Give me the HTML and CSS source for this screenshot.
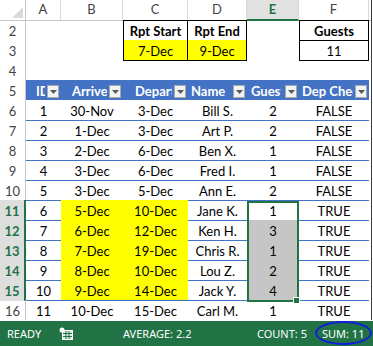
FILE: index.html
```html
<!DOCTYPE html>
<html lang="en">
<head>
  <meta charset="UTF-8">
  <meta name="viewport" content="width=device-width, initial-scale=1.0">
  <title>Guest Report</title>
  <link rel="stylesheet" href="styles.css">
</head>
<body>

  <div class="sheet">
    <!-- column letters -->
    <div class="row">
      <div class="corner">
        <svg width="11" height="11" viewBox="0 0 11 11"><path d="M11 0V11H0z" fill="#dadada"/></svg>
      </div>
      <div class="col-head">A</div>
      <div class="col-head">B</div>
      <div class="col-head">C</div>
      <div class="col-head">D</div>
      <div class="col-head is-active">E</div>
      <div class="col-head">F</div>
      <div class="col-head col-head-end"></div>
    </div>

    <!-- report inputs -->
    <div class="row">
      <div class="row-num">2</div>
      <div class="cell"></div>
      <div class="cell"></div>
      <div class="cell bold box box-top box-left">Rpt Start</div>
      <div class="cell bold box box-top">Rpt End</div>
      <div class="cell"></div>
      <div class="cell bold box box-top box-left">Guests</div>
      <div class="cell"></div>
    </div>
    <div class="row">
      <div class="row-num">3</div>
      <div class="cell"></div>
      <div class="cell"></div>
      <div class="cell box box-left is-yellow">7-Dec</div>
      <div class="cell box is-yellow">9-Dec</div>
      <div class="cell"></div>
      <div class="cell box box-left">11</div>
      <div class="cell"></div>
    </div>
    <div class="row">
      <div class="row-num">4</div>
      <div class="cell"></div><div class="cell"></div><div class="cell"></div>
      <div class="cell"></div><div class="cell"></div><div class="cell"></div><div class="cell"></div>
    </div>

    <!-- bookings table -->
    <div class="row">
      <div class="row-num">5</div>
      <div class="th th-a"><span class="th-label">ID</span><span class="th-btn"><svg width="7" height="4" viewBox="0 0 7 4"><path d="M0 0H7L3.5 4z" fill="#595959"/></svg></span></div>
      <div class="th th-b"><span class="th-label">Arrived</span><span class="th-btn"><svg width="7" height="4" viewBox="0 0 7 4"><path d="M0 0H7L3.5 4z" fill="#595959"/></svg></span></div>
      <div class="th th-c"><span class="th-label">Departed</span><span class="th-btn"><svg width="7" height="4" viewBox="0 0 7 4"><path d="M0 0H7L3.5 4z" fill="#595959"/></svg></span></div>
      <div class="th th-d"><span class="th-label">Name</span><span class="th-btn"><svg width="7" height="4" viewBox="0 0 7 4"><path d="M0 0H7L3.5 4z" fill="#595959"/></svg></span></div>
      <div class="th th-e"><span class="th-label">Guests</span><span class="th-btn"><svg width="7" height="4" viewBox="0 0 7 4"><path d="M0 0H7L3.5 4z" fill="#595959"/></svg></span></div>
      <div class="th th-f"><span class="th-label">Dep Check</span><span class="th-btn"><svg width="7" height="4" viewBox="0 0 7 4"><path d="M0 0H7L3.5 4z" fill="#595959"/></svg></span></div>
      <div class="cell"></div>
    </div>
    <div class="row">
      <div class="row-num">6</div>
      <div class="cell td">1</div><div class="cell td">30-Nov</div><div class="cell td">3-Dec</div>
      <div class="cell td">Bill S.</div><div class="cell td">2</div><div class="cell td">FALSE</div><div class="cell"></div>
    </div>
    <div class="row">
      <div class="row-num">7</div>
      <div class="cell td">2</div><div class="cell td">1-Dec</div><div class="cell td">3-Dec</div>
      <div class="cell td">Art P.</div><div class="cell td">2</div><div class="cell td">FALSE</div><div class="cell"></div>
    </div>
    <div class="row">
      <div class="row-num">8</div>
      <div class="cell td">3</div><div class="cell td">2-Dec</div><div class="cell td">6-Dec</div>
      <div class="cell td">Ben X.</div><div class="cell td">1</div><div class="cell td">FALSE</div><div class="cell"></div>
    </div>
    <div class="row">
      <div class="row-num">9</div>
      <div class="cell td">4</div><div class="cell td">3-Dec</div><div class="cell td">6-Dec</div>
      <div class="cell td">Fred I.</div><div class="cell td">1</div><div class="cell td">FALSE</div><div class="cell"></div>
    </div>
    <div class="row">
      <div class="row-num">10</div>
      <div class="cell td">5</div><div class="cell td">3-Dec</div><div class="cell td">5-Dec</div>
      <div class="cell td">Ann E.</div><div class="cell td">2</div><div class="cell td">FALSE</div><div class="cell"></div>
    </div>
    <div class="row">
      <div class="row-num is-active">11</div>
      <div class="cell td">6</div><div class="cell td is-yellow">5-Dec</div><div class="cell td is-yellow">10-Dec</div>
      <div class="cell td">Jane K.</div><div class="cell td">1</div><div class="cell td">TRUE</div><div class="cell"></div>
    </div>
    <div class="row">
      <div class="row-num is-active">12</div>
      <div class="cell td">7</div><div class="cell td is-yellow">6-Dec</div><div class="cell td is-yellow">12-Dec</div>
      <div class="cell td">Ken H.</div><div class="cell td is-selected">3</div><div class="cell td">TRUE</div><div class="cell"></div>
    </div>
    <div class="row">
      <div class="row-num is-active">13</div>
      <div class="cell td">8</div><div class="cell td is-yellow">7-Dec</div><div class="cell td is-yellow">19-Dec</div>
      <div class="cell td">Chris R.</div><div class="cell td is-selected">1</div><div class="cell td">TRUE</div><div class="cell"></div>
    </div>
    <div class="row">
      <div class="row-num is-active">14</div>
      <div class="cell td">9</div><div class="cell td is-yellow">8-Dec</div><div class="cell td is-yellow">10-Dec</div>
      <div class="cell td">Lou Z.</div><div class="cell td is-selected">2</div><div class="cell td">TRUE</div><div class="cell"></div>
    </div>
    <div class="row">
      <div class="row-num is-active">15</div>
      <div class="cell td">10</div><div class="cell td is-yellow">9-Dec</div><div class="cell td is-yellow">14-Dec</div>
      <div class="cell td">Jack Y.</div><div class="cell td is-selected">4</div><div class="cell td">TRUE</div><div class="cell"></div>
    </div>
    <div class="row">
      <div class="row-num">16</div>
      <div class="cell td">11</div><div class="cell td">10-Dec</div><div class="cell td">15-Dec</div>
      <div class="cell td">Carl M.</div><div class="cell td">1</div><div class="cell td">TRUE</div><div class="cell"></div>
    </div>

    <!-- selected range E11:E15 -->
    <div class="selection"><span class="fill-handle"></span></div>
  </div>

  <div class="status-bar">
    <span class="status-ready">READY</span>
    <span class="status-icon">
      <svg width="14" height="14" viewBox="0 0 14 14">
        <rect x="3.5" y="3.5" width="10" height="9" fill="#dfe9e3" stroke="#ffffff"/>
        <path d="M4 6.5H13M4 9.5H13M7 4V12M10 4V12" stroke="#217346" stroke-width="1"/>
        <circle cx="3" cy="3" r="2.5" fill="#ffffff"/>
      </svg>
    </span>
    <span class="status-avg">AVERAGE: 2.2</span>
    <span class="status-count">COUNT: 5</span>
    <span class="status-sum">SUM: 11</span>
    <span class="sum-circle"></span>
  </div>

</body>
</html>
```

FILE: styles.css
```css
body {
  margin: 0;
  width: 373px;
  height: 346px;
  overflow: hidden;
  background: #fff;
  font-family: Lato, "Liberation Sans", sans-serif;
  font-size: 13px;
  color: #000;
}

.sheet {
  position: relative;
  width: 372px;
  border-right: 1px solid #3c3c3c;
  box-sizing: border-box;
}

.row {
  display: grid;
  grid-template-columns: 26px 35px 62px 65px 59px 52px 70px 1fr;
  height: 20px;
}

.row > div {
  box-sizing: border-box;
  min-width: 0;
}

/* headers */
.corner {
  display: flex;
  align-items: flex-end;
  justify-content: flex-end;
  padding: 0 2px 2px 0;
  border-right: 1px solid #c6c6c6;
  border-bottom: 1px solid #c6c6c6;
}

.col-head {
  text-align: center;
  line-height: 19px;
  color: #444;
  border-right: 1px solid #dadada;
  border-bottom: 1px solid #c6c6c6;
}

.col-head-end {
  border-right: none;
}

.col-head.is-active {
  background: #e1e1e1;
  color: #217346;
  font-weight: bold;
  border-bottom: 2px solid #217346;
}

.row-num {
  text-align: center;
  line-height: 18px;
  padding-top: 2px;
  color: #444;
  border-right: 1px solid #c6c6c6;
}

.row-num.is-active {
  background: #dedede;
  color: #217346;
  font-weight: bold;
  border-right: 2px solid #217346;
}

/* cells */
.cell {
  text-align: center;
  line-height: 18px;
  padding-top: 2px;
  white-space: nowrap;
}

.bold {
  font-weight: bold;
}

.box {
  border-right: 1px solid #000;
  border-bottom: 1px solid #000;
}

.box-top {
  border-top: 1px solid #000;
  padding-top: 1px;
}

.box-left {
  border-left: 1px solid #000;
}

.is-yellow {
  background: #ffff00;
}

.is-selected {
  background: #c6c6c6;
}

/* table */
.th {
  display: flex;
  align-items: flex-end;
  background: #4472c4;
  color: #fff;
  font-weight: bold;
}

.th-label {
  flex: 1;
  min-width: 0;
  align-self: stretch;
  overflow: hidden;
  white-space: nowrap;
  line-height: 18px;
  padding-top: 2px;
  margin-right: 2px;
}

.th-a .th-label { padding-left: 10px; }
.th-b .th-label { padding-left: 11px; }
.th-c .th-label { padding-left: 12px; }
.th-d .th-label { padding-left: 3px; }
.th-e .th-label { padding-left: 4px; margin-right: 4px; }
.th-f .th-label { padding-left: 3px; }

.th-btn {
  flex: none;
  display: flex;
  align-items: center;
  justify-content: center;
  width: 12px;
  height: 13px;
  margin: 0 2px 2px 0;
  box-sizing: border-box;
  background: #f3f3f3;
  border: 1px solid #a8a8a8;
}

.td {
  border-bottom: 1px solid #4472c4;
}

.selection {
  position: absolute;
  left: 247px;
  top: 201px;
  width: 52px;
  height: 101px;
  box-sizing: border-box;
  border: 2px solid #217346;
  pointer-events: none;
}

.fill-handle {
  position: absolute;
  right: -3px;
  bottom: -4px;
  width: 5px;
  height: 5px;
  background: #217346;
  border: 1px solid #fff;
}

/* status bar */
.status-bar {
  position: relative;
  display: flex;
  align-items: center;
  height: 25px;
  border-top: 1px solid #fff;
  padding-left: 7px;
  background: #217346;
  color: #fff;
  font-family: "Noto Sans", "Open Sans", sans-serif;
  font-size: 11px;
}

.status-ready { width: 52px; }
.status-icon { width: 64px; display: flex; }
.status-avg { width: 134px; }
.status-count { width: 65px; }

.sum-circle {
  position: absolute;
  left: 315px;
  top: 0;
  width: 57px;
  height: 24px;
  box-sizing: border-box;
  border: 2.5px solid #1020d8;
  border-radius: 50%;
}
```
